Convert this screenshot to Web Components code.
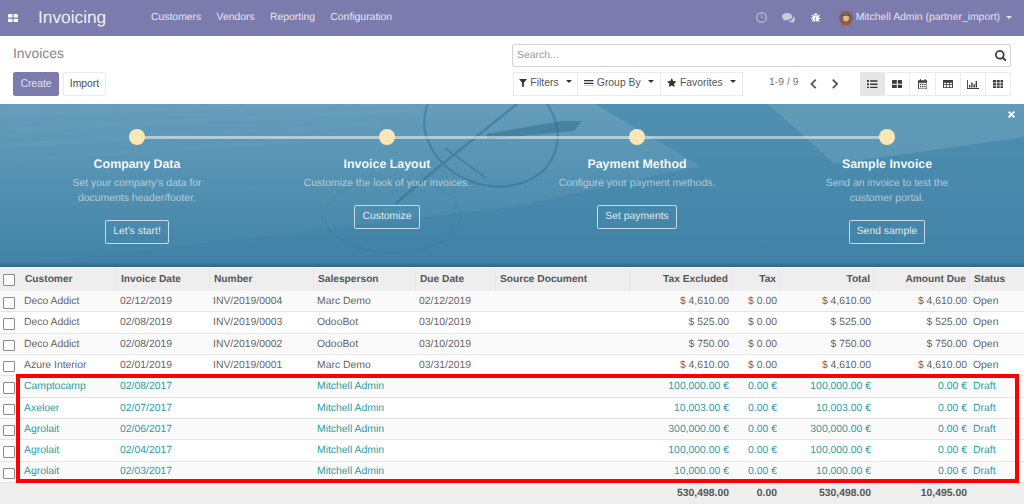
<!DOCTYPE html>
<html lang="en">
<head>
<meta charset="utf-8">
<title>Invoices</title>
<style>
  html, body { margin: 0; height: 504px; overflow: hidden; background: #fff; }
  body { font: 10.4px/1.5 "Liberation Sans", Arial, sans-serif; color: #666; text-rendering: geometricPrecision; }
</style>
</head>
<body>
<app-navbar>
  <nav-link>Customers</nav-link>
  <nav-link>Vendors</nav-link>
  <nav-link>Reporting</nav-link>
  <nav-link>Configuration</nav-link>
</app-navbar>
<control-panel></control-panel>
<setup-banner>
  <setup-step title="Company Data" action="Let's start!">Set your company's data for<br>documents header/footer.</setup-step>
  <setup-step title="Invoice Layout" action="Customize">Customize the look of your invoices.</setup-step>
  <setup-step title="Payment Method" action="Set payments">Configure your payment methods.</setup-step>
  <setup-step title="Sample Invoice" action="Send sample" last>Send an invoice to test the<br>customer portal.</setup-step>
</setup-banner>
<invoice-list></invoice-list>

<script>
  const ICONS = {
    apps: '<path d="M0 1.2Q0 0 1.2 0H4.4V3.6H0ZM5.6 0H8.8Q10 0 10 1.2V3.6H5.6ZM0 4.8H4.4V8.4H1.2Q0 8.4 0 7.2ZM5.6 4.8H10V7.2Q10 8.4 8.8 8.4H5.6Z"/>',
    clock: '<path fill-rule="evenodd" d="M6 0a6 6 0 1 0 0 12A6 6 0 0 0 6 0Zm0 1.6a4.4 4.4 0 1 1 0 8.8 4.4 4.4 0 0 1 0-8.8ZM5.4 3v3.6h2.8V5.6H6.5V3Z"/>',
    comments: '<path d="M5.5 0C2.5 0 0 1.7 0 3.9 0 5.1.8 6.2 2 6.9L1.2 8.6 3.6 7.6C4.2 7.7 4.8 7.8 5.5 7.8 8.5 7.8 11 6.1 11 3.9S8.5 0 5.5 0Z"/><path d="M11.8 3.6C12 4 12 4.4 12 4.8 12 7 9.7 8.7 6.6 8.9 7.4 9.6 8.6 10 10 10 10.4 10 10.8 10 11.2 9.9L13.2 10.9 12.6 9.2C13.4 8.6 14 7.8 14 6.9 14 5.5 13.1 4.3 11.8 3.6Z"/>',
    bug: '<path d="M3.6 2.4a2.4 2.2 0 0 1 4.8 0ZM2.5 3.2H9.5L10.6 2 11.4 2.8 10 4.2V6H12V7.2H10C10 7.9 9.9 8.5 9.6 9L11.2 10.6 10.4 11.4 8.9 9.9C8.3 10.6 7.2 11 6.5 11V4.8H5.5V11C4.8 11 3.7 10.6 3.1 9.9L1.6 11.4.8 10.6 2.4 9C2.1 8.5 2 7.9 2 7.2H0V6H2V4.2L.6 2.8 1.4 2Z"/>',
    search: '<path fill-rule="evenodd" d="M5.6 0a5.6 5.6 0 1 0 3.2 10.2l3 3a1.1 1.1 0 0 0 1.6-1.6l-3-3A5.6 5.6 0 0 0 5.6 0Zm0 2a3.6 3.6 0 1 1 0 7.2 3.6 3.6 0 0 1 0-7.2Z"/>',
    filter: '<path d="M0 0H9L5.5 4.2V10L3.5 8.4V4.2Z"/>',
    bars: '<path d="M0 0H11V1.4H0ZM0 3.3H11V4.7H0ZM0 6.6H11V8H0Z"/>',
    star: '<path d="M5.5 0 7.2 3.5 11 4 8.2 6.7 8.9 10.5 5.5 8.7 2.1 10.5 2.8 6.7 0 4 3.8 3.5Z"/>',
    left: '<path d="M5.6 0 7 1.4 3 5.4 7 9.4 5.6 10.8.2 5.4Z"/>',
    right: '<path d="M1.6 0 7 5.4 1.6 10.8.2 9.4 4.2 5.4.2 1.4Z"/>',
    list: '<path d="M0 0H2V2H0ZM3.2 .2H11V1.8H3.2ZM0 3.5H2V5.5H0ZM3.2 3.7H11V5.3H3.2ZM0 7H2V9H0ZM3.2 7.2H11V8.8H3.2Z"/>',
    kanban: '<path d="M0 .8Q0 0 .8 0H4.8V3.7H0ZM5.8 0H9.2Q10 0 10 .8V3.7H5.8ZM0 4.7H4.8V8.4H.8Q0 8.4 0 7.6ZM5.8 4.7H10V7.6Q10 8.4 9.2 8.4H5.8Z"/>',
    calendar: '<path fill-rule="evenodd" d="M2 0H3V1.2H7V0H8V1.2H10V11H0V1.2H2ZM1 4V10H9V4ZM2 5H3.4V6.3H2ZM4.3 5H5.7V6.3H4.3ZM6.6 5H8V6.3H6.6ZM2 7.5H3.4V8.8H2ZM4.3 7.5H5.7V8.8H4.3ZM6.6 7.5H8V8.8H6.6Z"/>',
    table: '<path fill-rule="evenodd" d="M0 0H11V9H0ZM1 3V4.6H3.2V3ZM4.1 3V4.6H6.9V3ZM7.8 3V4.6H10V3ZM1 5.5V8H3.2V5.5ZM4.1 5.5V8H6.9V5.5ZM7.8 5.5V8H10V5.5Z"/>',
    chart: '<path d="M0 0H.9V8.1H12V9H0ZM2 5H3.4V7.4H2ZM4.2 2.6H5.6V7.4H4.2ZM6.4 4.2H7.8V7.4H6.4ZM8.6 1H10V7.4H8.6Z"/>',
    grid: '<path d="M0 0H3V2.4H0ZM3.8 0H6.8V2.4H3.8ZM7.6 0H10.6V2.4H7.6ZM0 3.2H3V5.6H0ZM3.8 3.2H6.8V5.6H3.8ZM7.6 3.2H10.6V5.6H7.6ZM0 6.4H3V8.8H0ZM3.8 6.4H6.8V8.8H3.8ZM7.6 6.4H10.6V8.8H7.6Z"/>',
    close: '<path d="M1.5 0 4 2.5 6.5 0 8 1.5 5.5 4 8 6.5 6.5 8 4 5.5 1.5 8 0 6.5 2.5 4 0 1.5Z"/>'
  };
  const BOXES = { apps: [10, 8.4], clock: [12, 12], comments: [14, 11], bug: [12, 11.4], search: [13.6, 13.6], filter: [9, 10], bars: [11, 8], star: [11, 10.5], left: [7.2, 10.8], right: [7.2, 10.8], list: [11, 9], kanban: [10, 8.4], calendar: [10, 11], table: [11, 9], chart: [12, 9], grid: [10.6, 8.8], close: [8, 8] };

  function icon(name, width) {
    const [w, h] = BOXES[name];
    return `<svg width="${width}" height="${(width * h / w).toFixed(2)}" viewBox="0 0 ${w} ${h}" fill="currentColor" aria-hidden="true">${ICONS[name]}</svg>`;
  }

  class NavLink extends HTMLElement {
    constructor() {
      super();
      this.attachShadow({ mode: 'open' });
      this.shadowRoot.innerHTML = `
        <style>
          :host { display: block; color: rgba(255,255,255,.85); font-size: 10.4px; }
        </style>
        <slot></slot>
      `;
    }
  }
  customElements.define('nav-link', NavLink);

  class AppNavbar extends HTMLElement {
    constructor() {
      super();
      this.attachShadow({ mode: 'open' });
      this.shadowRoot.innerHTML = `
        <style>
          :host {
            display: flex; align-items: center; height: 36px; background: #7c7bad;
            color: #fff; font-family: "Liberation Sans", Arial, sans-serif;
          }
          .apps { display: flex; margin-left: 8px; color: #fff; }
          .brand { margin-left: 20px; width: 113px; font-size: 17.3px; color: rgba(255,255,255,.9); }
          .menu { display: flex; gap: 15.3px; flex: 1; }
          .systray { display: flex; align-items: center; margin-right: 12px; font-size: 10.4px; color: rgba(255,255,255,.82); }
          .clock { display: flex; color: rgba(255,255,255,.42); }
          .chat { display: flex; margin-left: 15px; color: rgba(255,255,255,.6); }
          .bug { display: flex; margin-left: 16px; color: #fff; }
          .avatar { display: block; margin-left: 18px; margin-right: 3px; }
          .caret { margin-left: 6px; border: 3px solid transparent; border-top-color: currentColor; border-bottom: 0; }
        </style>
        <span class="apps">${icon('apps', 10)}</span>
        <span class="brand">Invoicing</span>
        <div class="menu"><slot></slot></div>
        <div class="systray">
          <span class="clock">${icon('clock', 11)}</span>
          <span class="chat">${icon('comments', 13)}</span>
          <span class="bug">${icon('bug', 9.5)}</span>
          <svg class="avatar" width="14" height="14" viewBox="0 0 13 13" aria-hidden="true">
            <circle cx="6.5" cy="6.5" r="6.5" fill="#7a6454"/>
            <path d="M2.5 13C3 10 4.5 9.5 6.5 9.5S10 10 10.5 13Z" fill="#a5562f"/>
            <ellipse cx="6.5" cy="6.2" rx="2.7" ry="3.4" fill="#e3b79b"/>
            <path d="M3.4 5C3.6 2.4 9.4 2.2 9.7 5 8 4 5 4 3.4 5Z" fill="#4a362b"/>
          </svg>
          <span>Mitchell Admin (partner_import)</span>
          <span class="caret"></span>
        </div>
      `;
    }
  }
  customElements.define('app-navbar', AppNavbar);

  class ControlPanel extends HTMLElement {
    constructor() {
      super();
      this.attachShadow({ mode: 'open' });
      const views = ['list', 'kanban', 'calendar', 'table', 'chart', 'grid'];
      const sizes = { list: 10.5, kanban: 10, calendar: 9.5, table: 10, chart: 12, grid: 10.5 };
      this.shadowRoot.innerHTML = `
        <style>
          :host {
            display: grid; grid-template-columns: 512px 1fr; height: 68px; box-sizing: border-box;
            background: #fff; font-family: "Liberation Sans", Arial, sans-serif; font-size: 10.4px; color: #4c4c4c;
          }
          .left { padding: 8px 0 0 13px; }
          h1 { margin: 0; font-size: 13.9px; line-height: 18px; font-weight: 400; color: #888; }
          .actions { display: flex; gap: 4px; margin-top: 10px; }
          button {
            font: inherit; height: 24px; padding: 0; box-sizing: border-box;
            border: 1px solid #ebebeb; background: #fff; color: #4c4c4c; border-radius: 2px;
            display: flex; align-items: center; justify-content: center;
          }
          .create { width: 46px; background: #7c7bad; border-color: #7c7bad; color: rgba(255,255,255,.8); }
          .import { width: 43px; }
          .right { padding: 8px 13px 0 0; }
          .search {
            display: flex; align-items: center; justify-content: space-between; height: 23px; box-sizing: border-box;
            border: 1px solid #d4d4d4; border-radius: 2px; padding: 0 4px 0 4px; color: #9a9a9a;
          }
          .search svg { color: #3d3d3d; }
          .tools { display: flex; align-items: center; margin-top: 5px; margin-left: 1px; }
          .filters { display: flex; }
          .filters button { gap: 3px; border-radius: 0; color: #555; padding-bottom: 2px; }
          .filters svg { color: #333; }
          .filters button + button { border-left: 0; }
          .caret { margin-left: 4px; margin-bottom: 3px; border: 3px solid transparent; border-top-color: #333; border-bottom: 0; }
          .pager { margin-left: 26px; width: 41px; color: #777; padding-bottom: 2px; }
          .nav { display: flex; gap: 15px; width: 50px; color: #555; }
          .views { display: flex; }
          .views button { width: 25.2px; border-radius: 0; color: #3c3c3c; }
          .views button + button { border-left: 0; }
          .views button.on { background: #e6e6e6; border-color: #e6e6e6; }
        </style>
        <div class="left">
          <h1>Invoices</h1>
          <div class="actions">
            <button class="create">Create</button>
            <button class="import">Import</button>
          </div>
        </div>
        <div class="right">
          <div class="search"><span>Search...</span>${icon('search', 11.5)}</div>
          <div class="tools">
            <div class="filters">
              <button style="width:65px">${icon('filter', 8)}Filters<span class="caret"></span></button>
              <button style="width:83px">${icon('bars', 9.5)}Group By<span class="caret"></span></button>
              <button style="width:82px">${icon('star', 9.5)}Favorites<span class="caret"></span></button>
            </div>
            <span class="pager">1-9 / 9</span>
            <span class="nav">${icon('left', 6.5)}${icon('right', 6.5)}</span>
            <div class="views">
              ${views.map((v, i) => `<button class="${i === 0 ? 'on' : ''}">${icon(v, sizes[v])}</button>`).join('')}
            </div>
          </div>
        </div>
      `;
    }
  }
  customElements.define('control-panel', ControlPanel);

  class SetupStep extends HTMLElement {
    constructor() {
      super();
      this.attachShadow({ mode: 'open' });
      const last = this.hasAttribute('last');
      this.shadowRoot.innerHTML = `
        <style>
          :host {
            display: flex; flex-direction: column; align-items: center; position: relative;
            text-align: center; font-family: "Liberation Sans", Arial, sans-serif;
          }
          .dot { width: 16px; height: 16px; border-radius: 50%; background: #fbe6b6; margin-top: 25px; position: relative; z-index: 1; }
          .line {
            position: absolute; left: 50%; top: 31.5px; width: 100%; height: 3px;
            background: rgba(255,255,255,.5); display: ${last ? 'none' : 'block'};
          }
          .title { margin-top: 10px; font-size: 12.4px; line-height: 18px; font-weight: 700; color: rgba(255,255,255,.95); }
          .text { margin-top: 3px; white-space: nowrap; font-size: 10.4px; line-height: 15px; color: rgba(255,255,255,.56); }
          .action {
            margin-top: 14px; height: 24px; box-sizing: border-box; display: flex; align-items: center;
            padding: 0 7px; border: 1px solid rgba(255,255,255,.7); border-radius: 2px;
            font-size: 10.4px; color: rgba(255,255,255,.85);
          }
        </style>
        <span class="line"></span>
        <span class="dot"></span>
        <div class="title">${this.getAttribute('title')}</div>
        <div class="text"><slot></slot></div>
        <div class="action">${this.getAttribute('action')}</div>
      `;
    }
  }
  customElements.define('setup-step', SetupStep);

  class SetupBanner extends HTMLElement {
    constructor() {
      super();
      this.attachShadow({ mode: 'open' });
      this.shadowRoot.innerHTML = `
        <style>
          :host {
            display: block; position: relative; height: 163px; overflow: hidden;
            background: linear-gradient(#4f8fb0, #4385a9 85%, #4082a6);
          }
          .art { position: absolute; inset: 0; width: 100%; height: 100%; filter: blur(.7px); }
          .steps { position: relative; display: grid; grid-template-columns: repeat(4, 250px); padding: 0 12px; }
          .shade { position: absolute; left: 0; right: 0; bottom: 0; height: 5px; background: linear-gradient(transparent, rgba(30,70,100,.5)); }
          .close { position: absolute; right: 9px; top: 7px; display: flex; color: #fff; }
        </style>
        <svg class="art" viewBox="0 0 1024 163" preserveAspectRatio="none" aria-hidden="true">
          <defs>
            <linearGradient id="fade" x1="0" y1="0" x2="0" y2="1">
              <stop offset="0" stop-color="#fff" stop-opacity=".13"/>
              <stop offset="1" stop-color="#fff" stop-opacity="0"/>
            </linearGradient>
          </defs>
          <path d="M0 0H595L700 62 512 103 0 163Z" fill="url(#fade)"/>
          <path d="M768 0H1024V33L835 60Z" fill="#fff" opacity=".11"/>
          <g stroke="#2c6587" fill="none" opacity=".42">
            <ellipse cx="491" cy="25" rx="68" ry="56" transform="rotate(20 491 25)" stroke-width="2.2"/>
            <path d="M517 0 440 62 395 100" stroke-width="2.5"/>
            <path d="M445 44 486 74" stroke-width="1.6"/>
          </g>
          <path d="M582 17H562L486 30 488 35 574 27Z" fill="#2c6587" opacity=".45"/>
          <g stroke="#2c6587" fill="none" opacity=".1">
            <ellipse cx="393" cy="112" rx="68" ry="37" stroke-width="2"/>
            <path d="M430 58C455 70 462 100 448 132" stroke-width="2"/>
          </g>
          <path d="M0 10 420 -2M0 26 420 6M0 42 380 20M0 58 300 36" stroke="#fff" stroke-width="5" opacity=".02" fill="none"/>
        </svg>
        <div class="steps"><slot></slot></div>
        <div class="shade"></div>
        <span class="close">${icon('close', 7)}</span>
      `;
    }
  }
  customElements.define('setup-banner', SetupBanner);

  class CheckBox extends HTMLElement {
    constructor() {
      super();
      this.attachShadow({ mode: 'open' });
      this.shadowRoot.innerHTML = `
        <style>
          :host { display: block; width: 11.5px; height: 11.5px; box-sizing: border-box; border: 1px solid #8a8a8a; border-radius: 1px; background: #fff; margin: 6px 0 0 3px; }
        </style>
      `;
    }
  }
  customElements.define('check-box', CheckBox);

  class AnnotationBox extends HTMLElement {
    constructor() {
      super();
      this.attachShadow({ mode: 'open' });
      this.shadowRoot.innerHTML = `
        <style>
          :host { position: absolute; left: 16px; top: 105.5px; width: 1002.5px; height: 109.5px; box-sizing: border-box; border: 4px solid #f00; pointer-events: none; }
        </style>
      `;
    }
  }
  customElements.define('annotation-box', AnnotationBox);

  const ROWS = [
    ['Deco Addict', '02/12/2019', 'INV/2019/0004', 'Marc Demo', '02/12/2019', '', '$ 4,610.00', '$ 0.00', '$ 4,610.00', '$ 4,610.00', 'Open'],
    ['Deco Addict', '02/08/2019', 'INV/2019/0003', 'OdooBot', '03/10/2019', '', '$ 525.00', '$ 0.00', '$ 525.00', '$ 525.00', 'Open'],
    ['Deco Addict', '02/08/2019', 'INV/2019/0002', 'OdooBot', '03/10/2019', '', '$ 750.00', '$ 0.00', '$ 750.00', '$ 750.00', 'Open'],
    ['Azure Interior', '02/01/2019', 'INV/2019/0001', 'Marc Demo', '03/31/2019', '', '$ 4,610.00', '$ 0.00', '$ 4,610.00', '$ 4,610.00', 'Open'],
    ['Camptocamp', '02/08/2017', '', 'Mitchell Admin', '', '', '100,000.00 €', '0.00 €', '100,000.00 €', '0.00 €', 'Draft'],
    ['Axeloer', '02/07/2017', '', 'Mitchell Admin', '', '', '10,003.00 €', '0.00 €', '10,003.00 €', '0.00 €', 'Draft'],
    ['Agrolait', '02/06/2017', '', 'Mitchell Admin', '', '', '300,000.00 €', '0.00 €', '300,000.00 €', '0.00 €', 'Draft'],
    ['Agrolait', '02/04/2017', '', 'Mitchell Admin', '', '', '100,000.00 €', '0.00 €', '100,000.00 €', '0.00 €', 'Draft'],
    ['Agrolait', '02/03/2017', '', 'Mitchell Admin', '', '', '10,000.00 €', '0.00 €', '10,000.00 €', '0.00 €', 'Draft']
  ];
  const HEADS = ['Customer', 'Invoice Date', 'Number', 'Salesperson', 'Due Date', 'Source Document', 'Tax Excluded', 'Tax', 'Total', 'Amount Due', 'Status'];
  const isNum = i => i >= 6 && i <= 9;

  class InvoiceList extends HTMLElement {
    constructor() {
      super();
      this.attachShadow({ mode: 'open' });
      const cells = (values) => values.map((v, i) => `<div class="cell${isNum(i) ? ' num' : ''}">${v}</div>`).join('');
      this.shadowRoot.innerHTML = `
        <style>
          :host {
            display: block; position: relative; height: 236px; margin-top: 1px;
            background: #eee; font-family: "Liberation Sans", Arial, sans-serif; font-size: 10.4px; color: #666;
          }
          .row {
            display: grid; grid-template-columns: 21px 96px 93px 104px 102px 80px 134px 102px 48px 94px 96px 54px;
            height: 21.33px; box-sizing: border-box; align-items: center; background: #fff; border-bottom: 1px solid #e4e4e4;
          }
          .row > .box { align-self: start; }
          .row.alt { background: #fafafa; }
          .row.draft { color: #2a9ea8; }
          .cell { padding: 1px 3px 0; white-space: nowrap; }
          .num { text-align: right; }
          .head { height: 23px; background: #eee; border: 0; font-size: 10.2px; font-weight: 700; color: #555; align-items: stretch; }
          .head .cell { display: flex; align-items: center; border-right: 1px solid #e6e6e6; padding: 0 3px 0 4px; }
          .head .num { justify-content: flex-end; padding-left: 0; }
          .head .cell:last-child { border-right: 0; }
          .foot { height: 21px; background: #eee; border: 0; font-weight: 700; color: #555; }
          .foot .cell { padding-top: 0; }
        </style>
        <div class="row head"><div class="box"><check-box></check-box></div>${cells(HEADS)}</div>
        ${ROWS.map((r, i) => `<div class="row${i % 2 ? '' : ' alt'}${r[10] === 'Draft' ? ' draft' : ''}"><div class="box"><check-box></check-box></div>${cells(r)}</div>`).join('')}
        <div class="row foot"><div></div>${cells(['', '', '', '', '', '', '530,498.00', '0.00', '530,498.00', '10,495.00', ''])}</div>
        <annotation-box></annotation-box>
      `;
    }
  }
  customElements.define('invoice-list', InvoiceList);
</script>
</body>
</html>
